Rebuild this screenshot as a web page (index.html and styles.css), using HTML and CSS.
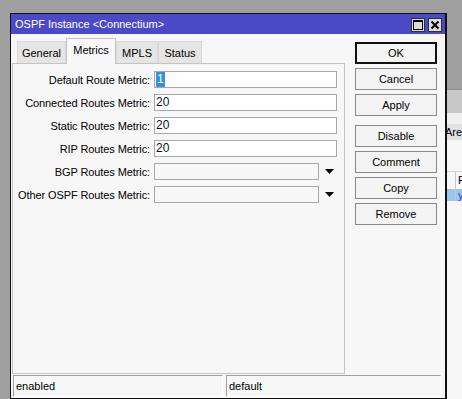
FILE: index.html
```html
<!DOCTYPE html>
<html lang="en">
<head>
    <meta charset="UTF-8">
    <title>OSPF Instance &lt;Connectium&gt;</title>
    <link rel="stylesheet" href="styles.css">
</head>
<body>
    <!-- Main app behind the dialog -->
    <div class="app-bg">
        <div class="bg-top"></div>
        <div class="bg-toolbar"></div>
        <div class="bg-gap"></div>
        <div class="bg-tabs">Area</div>
        <div class="bg-list"></div>
        <div class="bg-head"><span class="bg-cell">F</span></div>
        <div class="bg-row"><span class="bg-cell">y</span></div>
    </div>

    <!-- Dialog window -->
    <div class="window">
        <div class="titlebar">
            <span class="title">OSPF Instance &lt;Connectium&gt;</span>
            <span class="tb-btn">
                <svg width="12" height="12" viewBox="0 0 12 12"><rect x="1.5" y="1.5" width="9" height="9" fill="none" stroke="#000" stroke-width="1"/><rect x="1" y="1" width="10" height="2" fill="#000"/></svg>
            </span>
            <span class="tb-btn">
                <svg width="12" height="12" viewBox="0 0 12 12"><path d="M2.5 2.5 L9.5 9.5 M9.5 2.5 L2.5 9.5" stroke="#000" stroke-width="2"/></svg>
            </span>
        </div>

        <div class="win-body">
            <div class="left">
                <div class="tabbar">
                    <div class="tab tab-general">General</div>
                    <div class="tab tab-metrics active">Metrics</div>
                    <div class="tab tab-mpls">MPLS</div>
                    <div class="tab tab-status">Status</div>
                </div>
                <div class="panel">
                    <div class="row">
                        <label class="label">Default Route Metric:</label>
                        <div class="input"><span class="sel">1</span></div>
                    </div>
                    <div class="row">
                        <label class="label">Connected Routes Metric:</label>
                        <div class="input">20</div>
                    </div>
                    <div class="row">
                        <label class="label">Static Routes Metric:</label>
                        <div class="input">20</div>
                    </div>
                    <div class="row">
                        <label class="label">RIP Routes Metric:</label>
                        <div class="input">20</div>
                    </div>
                    <div class="row">
                        <label class="label">BGP Routes Metric:</label>
                        <div class="input combo"></div>
                        <svg class="arrow" width="9" height="5" viewBox="0 0 9 5"><polygon points="0,0 9,0 4.5,5" fill="#000"/></svg>
                    </div>
                    <div class="row">
                        <label class="label">Other OSPF Routes Metric:</label>
                        <div class="input combo"></div>
                        <svg class="arrow" width="9" height="5" viewBox="0 0 9 5"><polygon points="0,0 9,0 4.5,5" fill="#000"/></svg>
                    </div>
                </div>
            </div>

            <div class="buttons">
                <div class="btn default">OK</div>
                <div class="btn">Cancel</div>
                <div class="btn">Apply</div>
                <div class="btn spaced">Disable</div>
                <div class="btn">Comment</div>
                <div class="btn">Copy</div>
                <div class="btn">Remove</div>
            </div>
        </div>

        <div class="statusbar">
            <div class="field field-state">enabled</div>
            <div class="field field-name">default</div>
        </div>
    </div>
</body>
</html>
```

FILE: styles.css
```css
body {
    margin: 0;
    width: 462px;
    height: 399px;
    overflow: hidden;
    position: relative;
    background-color: #a0a0a0;
    font-family: "Liberation Sans", Arial, sans-serif;
    font-size: 11px;
    color: #000;
}

/* background application, only its right part shows */
.app-bg {
    margin-left: 300px;
    height: 399px;
    background-color: #f7f7f7;
}

.bg-top {
    height: 89px;
    background-color: #a0a0a0;
}

.bg-toolbar {
    height: 23px;
    background-color: #c8c8c8;
    border-top: 1px solid #8c8c8c;
}

.bg-gap {
    height: 11px;
    background-color: #f0f0f0;
}

.bg-tabs {
    height: 16px;
    line-height: 16px;
    padding-left: 145px;
    background-color: #e1e1e1;
    white-space: nowrap;
}

.bg-list {
    height: 31px;
    background-color: #f7f7f7;
}

.bg-head {
    height: 17px;
    line-height: 17px;
    padding-left: 155px;
    background-color: #f7f7f7;
    border-top: 1px solid #d0d0d0;
}

.bg-row {
    height: 12px;
    line-height: 12px;
    padding-left: 155px;
    background-color: #99c8ee;
    color: #4030c0;
}

.bg-cell {
    display: block;
    padding-left: 2px;
    border-left: 1px solid #c8c8c8;
}

/* dialog window */
.window {
    position: absolute;
    left: 10px;
    top: 13px;
    width: 434px;
    height: 384px;
    border: 1px solid #101010;
    border-right-width: 2px;
    background-color: #f7f7f7;
}

.titlebar {
    height: 20px;
    display: flex;
    align-items: center;
    padding: 0 3px 0 4px;
    background-color: #4a4ac6;
    color: #fff;
}

.title {
    flex: 1;
    font-size: 11px;
}

.tb-btn {
    width: 14px;
    height: 14px;
    box-sizing: border-box;
    margin-left: 3px;
    margin-top: 2px;
    border: 1px solid #303030;
    background-color: #dcdcdc;
    display: flex;
    align-items: center;
    justify-content: center;
}

.win-body {
    height: 340px;
    display: flex;
    padding-left: 1px;
}

.left {
    width: 333px;
    display: flex;
    flex-direction: column;
}

.tabbar {
    height: 29px;
    display: flex;
    align-items: flex-end;
    padding-left: 5px;
}

.tab {
    height: 22px;
    line-height: 22px;
    box-sizing: border-box;
    text-align: center;
    background-color: #e5e5e5;
    border: 1px solid #d8d8d8;
    border-bottom: none;
}

.tab-general { width: 49px; }
.tab-metrics { width: 50px; }
.tab-mpls { width: 42px; }
.tab-status { width: 44px; }

.tab.active {
    height: 26px;
    line-height: 22px;
    background-color: #f7f7f7;
    border-color: #c4c4c4;
    margin-bottom: -1px;
    position: relative;
}

.panel {
    flex: 1;
    border: 1px solid #c4c4c4;
    padding-top: 7px;
}

.row {
    display: flex;
    align-items: center;
    height: 17px;
    margin-bottom: 6px;
}

.label {
    width: 137px;
    text-align: right;
    margin-right: 4px;
    white-space: nowrap;
    letter-spacing: -0.1px;
}

.input {
    width: 183px;
    height: 17px;
    box-sizing: border-box;
    border: 1px solid #a8a8a8;
    background-color: #fff;
    padding-left: 1px;
    line-height: 15px;
    font-size: 12px;
    color: #10102a;
}

.sel {
    display: inline-block;
    padding: 0 1px;
    background-color: #3390e8;
    color: #fff;
}

.combo {
    width: 165px;
    background-color: #f7f7f7;
}

.arrow {
    margin-left: 6px;
}

.buttons {
    margin-left: 10px;
    padding-top: 8px;
    display: flex;
    flex-direction: column;
    gap: 4px;
}

.btn {
    width: 82px;
    height: 22px;
    box-sizing: border-box;
    border: 1px solid #8a8a8a;
    background-color: #f4f4f4;
    text-align: center;
    line-height: 20px;
}

.btn.default {
    border: 2px solid #111;
    line-height: 18px;
}

.btn.spaced {
    margin-top: 5px;
}

.statusbar {
    height: 24px;
    box-sizing: border-box;
    display: flex;
    gap: 3px;
    padding: 1px 3px 1px 2px;
}

.field {
    height: 22px;
    box-sizing: border-box;
    border-top: 1px solid #a0a0a0;
    border-left: 1px solid #a0a0a0;
    border-right: 1px solid #fff;
    border-bottom: 1px solid #fff;
    padding: 4px 0 0 2px;
}

.field-state { width: 210px; }
.field-name { width: 215px; }
```
